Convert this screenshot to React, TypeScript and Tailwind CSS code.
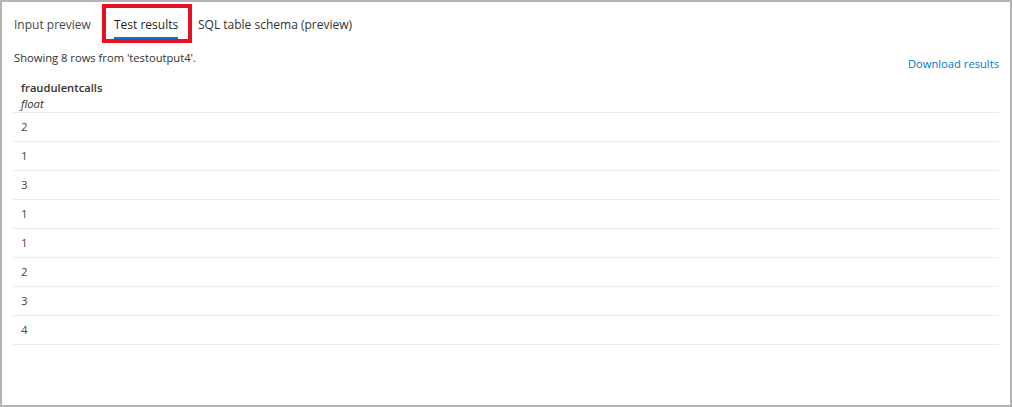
import React from "react";

const rows = [2, 1, 3, 1, 1, 2, 3, 4];

const font = { fontFamily: '"Segoe UI", "Open Sans", "Noto Sans", sans-serif' };

export default function App() {
  return (
    <div
      className="relative w-[1012px] h-[407px] box-border border-2 border-[#b4b4b4] bg-white text-[#323130] overflow-hidden"
      style={font}
    >
      {/* tab strip */}
      <div className="flex items-start pl-[12px] pt-[13px]">
        <div className="w-[100px] text-[12px] leading-[20px] text-[#484644]">Input preview</div>
        <div className="w-[84px]">
          <div className="flex flex-col w-fit">
            <div className="text-[12px] leading-[20px] text-[#201f1e]">Test results</div>
            <div className="mt-[2px] h-[2px] bg-[#0078d4]" />
          </div>
        </div>
        <div className="text-[12px] leading-[20px] text-[#323130]">SQL table schema (preview)</div>
      </div>

      {/* highlight annotation */}
      <div className="absolute left-[100px] top-[2px] w-[90px] h-[39px] border-4 border-[#e81123]" />

      <div className="px-[11px]">
        <div className="flex justify-between items-start mt-[11px]">
          <span className="ml-[1px] text-[11.2px] leading-[16px]">Showing 8 rows from 'testoutput4'.</span>
          <a className="mt-[6px] text-[11.2px] leading-[16px] text-[#0078d4] cursor-pointer">Download results</a>
        </div>

        <div className="mt-[8px] pl-[8px] border-b border-[#edebe9]">
          <div className="text-[11.2px] leading-[16px] font-semibold text-[#323130]">fraudulentcalls</div>
          <div className="text-[11.2px] leading-[16px] italic text-[#323130]">float</div>
        </div>

        {rows.map((v, i) => (
          <div key={i} className="h-[29px] flex items-center pl-[8px] border-b border-[#edebe9] text-[11.5px] text-[#484644]">
            {v}
          </div>
        ))}
      </div>
    </div>
  );
}
